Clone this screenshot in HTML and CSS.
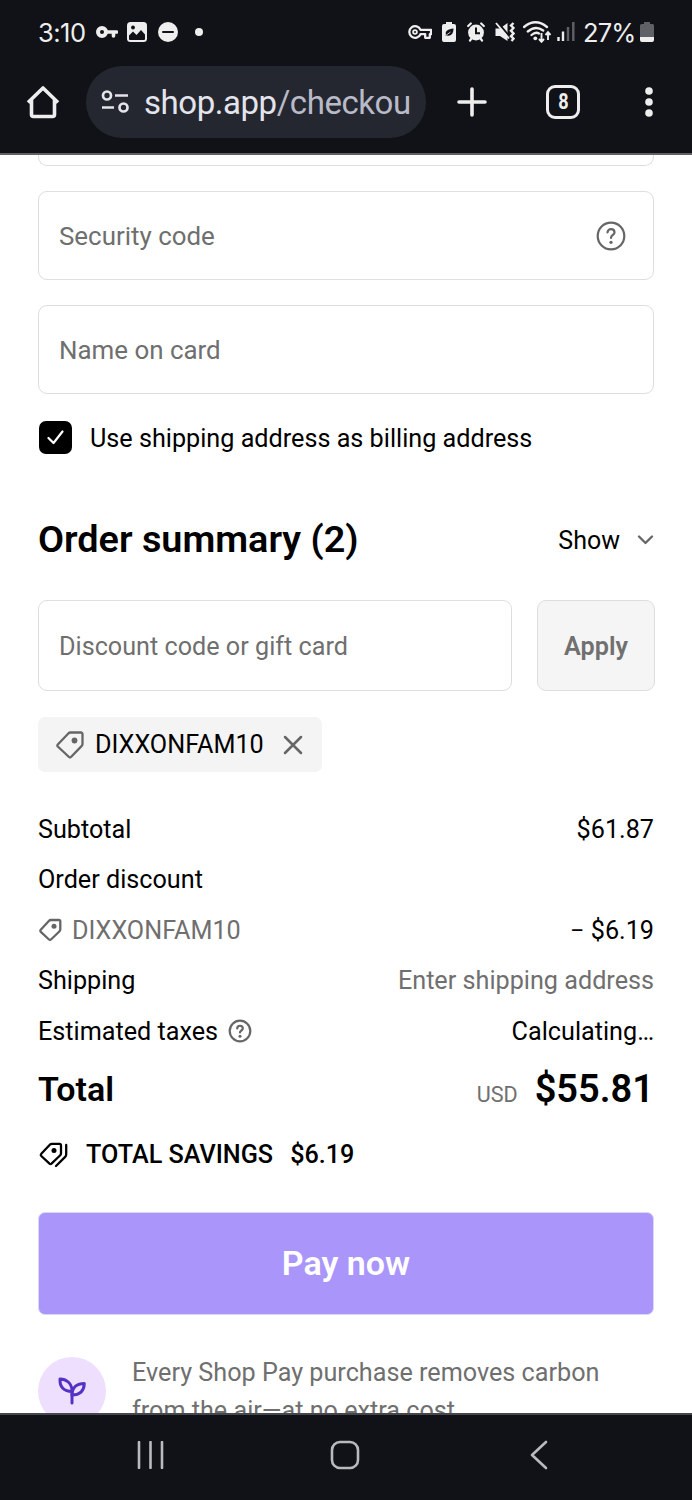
FILE: index.html
```html
<!DOCTYPE html>
<html lang="en">
<head>
<meta charset="utf-8">
<title>Checkout</title>
<link rel="stylesheet" href="styles.css">
</head>
<body>
<div class="phone">
  <header class="chrome">
    <div class="status">
      <div class="status-left">
        <span class="time">3:10</span>
        <svg class="i-key" width="22" height="16" viewBox="0 0 22 16"><circle cx="6" cy="8" r="4" fill="none" stroke="#eee" stroke-width="4"/><path d="M11 8h9.500M17.500 8v4" stroke="#eee" stroke-width="3.600" stroke-linecap="round"/></svg>
        <svg class="i-img" width="20" height="20" viewBox="0 0 20 20"><rect width="20" height="20" rx="3.500" fill="#eee"/><circle cx="6" cy="5.500" r="1.900" fill="#111217"/><path d="M2 17v-3.500L6 9.500l3.500 3.500 4.500-5 4 4.500V17a1 1 0 0 1-1 1H3a1 1 0 0 1-1-1z" fill="#111217"/></svg>
        <svg class="i-dnd" width="20" height="20" viewBox="0 0 20 20"><circle cx="10" cy="10" r="10" fill="#eee"/><path d="M5 10h10" stroke="#111217" stroke-width="2" stroke-linecap="round"/></svg>
        <svg class="i-dot" width="8" height="8" viewBox="0 0 8 8"><circle cx="4" cy="4" r="4" fill="#eee"/></svg>
      </div>
      <div class="status-right">
        <svg class="r-key" width="24" height="16" viewBox="0 0 24 16"><path d="M12.500 5.800H23v4.400h-1.200v3.600h-4.600v-3.600h-4.700A5.800 5.800 0 1 1 12.500 5.800z" fill="none" stroke="#eee" stroke-width="2.300" stroke-linejoin="round"/><circle cx="7" cy="8" r="1.900" fill="none" stroke="#eee" stroke-width="1.800"/></svg>
        <svg class="r-leaf" width="14" height="20" viewBox="0 0 14 20"><path d="M4 0h6v2h2a2 2 0 0 1 2 2v14a2 2 0 0 1-2 2H2a2 2 0 0 1-2-2V4a2 2 0 0 1 2-2h2z" fill="#eee"/><path d="M3 14l1-1.500C2.800 9 6 7 11.500 6.500c0 5-2.500 8-6.500 7z" fill="#111217"/><path d="M2.500 14.500L8.500 10" stroke="#eee" stroke-width=".8"/></svg>
        <svg class="r-alarm" width="18" height="20" viewBox="0 0 18 20"><circle cx="9" cy="10.500" r="7.900" fill="#eee"/><path d="M9 5.500v5.700h4" fill="none" stroke="#111217" stroke-width="2"/><path d="M1.200 4l2.600-2.500M16.800 4l-2.600-2.500M3 18.500l1.500-2M15 18.500l-1.500-2" stroke="#eee" stroke-width="2.200" stroke-linecap="round"/></svg>
        <svg class="r-mute" width="20" height="20" viewBox="0 0 20 20"><path d="M0.500 6.500H5L12.500 1v18L5 14H0.500z" fill="#eee"/><path d="M2.500 0l12 14.500" stroke="#111217" stroke-width="2"/><path d="M1 1l13 15.500" stroke="#eee" stroke-width="1.900"/><path d="M18.500 1l-2.500 2.500 2.500 2.500-2.500 2.800 2.500 2.700-2.500 2.700 2.500 2.500-2 2.300" fill="none" stroke="#eee" stroke-width="2.400"/></svg>
        <svg class="r-wifi" width="29" height="22" viewBox="0 0 29 22"><path d="M1 6Q12.500-3.500 24 6M4.800 10.500Q12.500 4 20.200 9.500M8.500 14Q12.500 10.500 16 12.500" fill="none" stroke="#eee" stroke-width="2.300" stroke-linecap="round"/><circle cx="12.300" cy="17.300" r="1.900" fill="#eee"/><path d="M18.500 12v8.500M16 18l2.500 2.800 2.500-2.800M25 19v-7.500M22.500 14L25 11.200l2.500 2.800" fill="none" stroke="#eee" stroke-width="1.900"/></svg>
        <svg class="r-sig" width="18" height="20" viewBox="0 0 18 20"><path d="M1.500 15v4M6 9.500V19" stroke="#eee" stroke-width="2.400"/><path d="M11 5v14M16.300 0v19" stroke="#606166" stroke-width="2.400"/></svg>
        <span class="pct">27%</span>
        <svg class="r-bat" width="14" height="20" viewBox="0 0 14 20"><path d="M4 0h6v2h2.500a1.500 1.500 0 0 1 1.500 1.500V15H0V3.500A1.500 1.500 0 0 1 1.500 2H4z" fill="#606166"/><path d="M0 15h14v3a2 2 0 0 1-2 2H2a2 2 0 0 1-2-2z" fill="#eee"/></svg>
      </div>
    </div>
    <div class="toolbar">
      <svg class="t-home" width="34" height="34" viewBox="0 0 34 34"><path d="M2 17.500L17 3l15 14.500M5.500 15v14.500a2 2 0 0 0 2 2h19a2 2 0 0 0 2-2V15" fill="none" stroke="#eee" stroke-width="3.600" stroke-linejoin="round"/></svg>
      <div class="omnibox">
        <svg class="t-tune" width="28" height="24" viewBox="0 0 28 24"><g fill="none" stroke="#e4e4ea" stroke-width="2.700"><circle cx="6" cy="5.500" r="4"/><path d="M14 5.500h13M1 17.500h12"/><circle cx="22.500" cy="17.500" r="4"/></g></svg>
        <span class="url">shop.app<span class="path">/checkou</span></span>
      </div>
      <svg class="t-plus" width="30" height="30" viewBox="0 0 30 30"><path d="M15 2v26M2 15h26" stroke="#eee" stroke-width="3.600" stroke-linecap="round"/></svg>
      <div class="tabs"><span class="count">8</span></div>
      <svg class="t-more" width="8" height="30" viewBox="0 0 8 30"><g fill="#eee"><circle cx="4" cy="4" r="3.800"/><circle cx="4" cy="15" r="3.800"/><circle cx="4" cy="26" r="3.800"/></g></svg>
    </div>
  </header>

  <main class="page">
    <div class="field cut"></div>
    <div class="field"><span>Security code</span>
      <svg width="30" height="30" viewBox="0 0 30 30"><g fill="none" stroke="#666" stroke-width="2.200" stroke-linecap="round"><circle cx="15" cy="15" r="13.300"/><path d="M11.500 11.500C11.500 7 18.500 7 18.500 11.500C18.500 14 15 14 15 17"/></g><circle cx="15" cy="21.300" r="1.600" fill="#666"/></svg>
    </div>
    <div class="field"><span>Name on card</span></div>
    <div class="check">
      <span class="box"><svg width="17" height="15" viewBox="0 0 17 15"><path d="M1.500 8l5 5L15.500 1.500" fill="none" stroke="#fff" stroke-width="2.200" stroke-linecap="round" stroke-linejoin="round"/></svg></span>
      <span>Use shipping address as billing address</span>
    </div>
    <div class="summary-head">
      <h2>Order summary (2)</h2>
      <span class="show"><span>Show</span><svg width="17" height="10" viewBox="0 0 17 10"><path d="M2 1.500l6.500 6.500L15 1.500" fill="none" stroke="#666" stroke-width="2.300" stroke-linecap="round" stroke-linejoin="round"/></svg></span>
    </div>
    <div class="discount">
      <div class="field code"><span>Discount code or gift card</span></div>
      <div class="apply"><span>Apply</span></div>
    </div>
    <div class="chip">
      <svg width="28" height="28" viewBox="0 0 28 28"><path d="M14.500 1.500H25a1.500 1.500 0 0 1 1.500 1.500v10a3 3 0 0 1-1 2.200L15 26a1.500 1.500 0 0 1-2 0L1.800 15.500a1.500 1.500 0 0 1 0-2L12.300 2.500a3 3 0 0 1 2.200-1z" fill="none" stroke="#666" stroke-width="2.300"/><circle cx="18.500" cy="9.500" r="2.900" fill="#666"/></svg>
      <span>DIXXONFAM10</span>
      <svg class="close" width="20" height="20" viewBox="0 0 20 20"><path d="M2 2l16 16M18 2L2 18" stroke="#666" stroke-width="2.500" stroke-linecap="round"/></svg>
    </div>
    <div class="rows">
      <div class="row"><span>Subtotal</span><span>$61.87</span></div>
      <div class="row"><span>Order discount</span></div>
      <div class="row"><span class="with-tag muted"><svg width="24" height="24" viewBox="0 0 24 24"><path d="M13 2h7.800a1.500 1.500 0 0 1 1.500 1.500v7.800a3 3 0 0 1-1 2.200L13 21.500a1.500 1.500 0 0 1-2 0L2.800 13.900a1.500 1.500 0 0 1 0-2.200L10.800 3A3 3 0 0 1 13 2z" fill="none" stroke="#666" stroke-width="2.300"/><circle cx="16" cy="8.200" r="2.500" fill="#666"/></svg><span>DIXXONFAM10</span></span><span>− $6.19</span></div>
      <div class="row"><span>Shipping</span><span class="muted">Enter shipping address</span></div>
      <div class="row"><span class="taxes"><span>Estimated taxes</span><svg width="24" height="24" viewBox="0 0 24 24"><g fill="none" stroke="#666" stroke-width="2.200" stroke-linecap="round"><circle cx="12" cy="12" r="10.300"/><path d="M9.200 9.500C9.200 5.800 14.800 5.800 14.800 9.500C14.800 11.500 12 11.500 12 13.500"/></g><circle cx="12" cy="17.200" r="1.500" fill="#666"/></svg></span><span>Calculating…</span></div>
    </div>
    <div class="total"><span>Total</span><span class="sum"><span class="usd">USD</span><span class="amount">$55.81</span></span></div>
    <div class="savings">
      <svg width="30" height="26" viewBox="0 0 30 26"><g fill="none" stroke="#000" stroke-width="2.300" stroke-linecap="round"><path d="M14 1.800h7.500A1.500 1.500 0 0 1 23 3.300v8a3 3 0 0 1-1 2.200l-8.500 8.200a1.500 1.500 0 0 1-2 0L3.300 14a1.500 1.500 0 0 1 0-2.200L11.800 2.800a3 3 0 0 1 2.200-1z"/><path d="M28.200 3v9.500a4 4 0 0 1-1.300 2.700L18 24"/></g><circle cx="16" cy="8.600" r="2.500"/></svg>
      <span class="savings-label">TOTAL SAVINGS</span><span class="savings-value">$6.19</span>
    </div>
    <div class="pay"><span>Pay now</span></div>
    <div class="carbon">
      <span class="leaf"><svg width="28" height="28" viewBox="0 0 28 28"><g fill="none" stroke="#5433c4" stroke-width="3" stroke-linecap="round" stroke-linejoin="round"><path d="M14 26V14C14 6 8 2 2 2C1.500 10 6 14.500 14 14.500"/><path d="M14 18C14 10 19.500 6.500 26.300 6.500C26 14 21.500 18 14 18z"/></g></svg></span>
      <p><span>Every Shop Pay purchase removes carbon</span><br><span>from the air—at no extra cost.</span></p>
    </div>
  </main>

  <footer class="nav">
    <svg class="n-recent" width="28" height="28" viewBox="0 0 28 28"><path d="M2 1v26M13.500 1v26M25 1v26" stroke="#b9babd" stroke-width="2.600" stroke-linecap="round"/></svg>
    <svg class="n-home" width="30" height="30" viewBox="0 0 30 30"><rect x="2" y="2" width="26" height="26" rx="8" fill="none" stroke="#b9babd" stroke-width="2.600"/></svg>
    <svg class="n-back" width="18" height="30" viewBox="0 0 18 30"><path d="M16 2L2 15l14 13" fill="none" stroke="#b9babd" stroke-width="2.600" stroke-linecap="round" stroke-linejoin="round"/></svg>
  </footer>
</div>
</body>
</html>
```
FILE: styles.css
```css
* { box-sizing: border-box; }
body { margin: 0; background: #fff; font-family: Roboto, "Liberation Sans", sans-serif; font-size: 25.2px; color: #000; }
svg { display: block; flex: none; }
span { white-space: nowrap; }
.phone { width: 692px; height: 1500px; display: flex; flex-direction: column; overflow: hidden; }

/* Status bar and browser toolbar */
.chrome { height: 155px; flex: none; background: #111217; border-bottom: 2px solid #606065; color: #eee; }
.status { height: 64px; display: flex; justify-content: space-between; padding: 0 38px; }
.status-left, .status-right { display: flex; align-items: center; }
.time, .pct { font-family: Inter, Roboto, sans-serif; font-size: 25.5px; letter-spacing: -0.5px; }
.time { width: 49px; }
.i-key { margin-left: 9px; }
.i-img { margin-left: 9px; }
.i-dnd { margin-left: 11px; }
.i-dot { margin-left: 17px; }
.r-leaf { margin-left: 10px; }
.r-alarm { margin-left: 11px; }
.r-mute { margin-left: 10px; }
.r-wifi { margin-left: 8px; }
.r-sig { margin-left: 5px; }
.pct { width: 54px; margin-left: 8px; letter-spacing: -0.9px; }
.r-bat { margin-left: 3px; }
.toolbar { display: flex; align-items: center; height: 76px; padding: 0 39px 0 26px; }
.omnibox { width: 340px; height: 72px; margin-left: 26px; background: #242730; border-radius: 36px; display: flex; align-items: center; padding-left: 15px; gap: 15px; }
.url { padding-top: 1px; font-size: 33px; letter-spacing: -0.45px; color: #e4e4ec; }
.path { color: #b9bac8; }
.t-plus { margin-left: 31px; }
.tabs { width: 34px; height: 34px; margin-left: 59px; border: 3.500px solid #eee; border-radius: 9px; display: flex; align-items: center; justify-content: center; }
.count { font-size: 22px; font-weight: 700; line-height: 26px; transform: scaleX(0.82); }
.t-more { margin-left: auto; }

/* Checkout form */
.page { flex: 1; min-height: 0; overflow: hidden; padding: 0 38px; }
.field { height: 89px; margin-bottom: 25px; border: 1.500px solid #dedede; border-radius: 9px; display: flex; align-items: center; justify-content: space-between; padding: 0 27px 0 20px; color: #6f6f6f; font-size: 25.9px; }
.field span { padding-top: 1px; }
.field.cut { height: 11px; border-top: 0; border-radius: 0 0 9px 9px; }
.check { display: flex; align-items: center; gap: 19px; height: 34px; margin-top: 26px; }
.check > span:last-child { padding-top: 3px; }
.box { width: 33px; height: 33px; margin-left: 1px; margin-right: -1px; background: #000; border-radius: 7px; display: flex; align-items: center; justify-content: center; }
.summary-head { display: flex; align-items: center; justify-content: space-between; height: 60px; margin-top: 56px; }
h2 { margin: 0; padding-bottom: 3px; font-size: 37.8px; font-weight: 600; }
.show { display: flex; align-items: center; gap: 17px; font-size: 25px; }
.discount { display: flex; gap: 25px; margin: 30px -1px 0 0; }
.field.code { flex: 1; height: 91px; margin: 0; font-size: 25.2px; }
.apply { width: 118px; height: 91px; background: #f5f5f5; border: 1.500px solid #dedede; border-radius: 9px; display: flex; align-items: center; justify-content: center; padding-top: 1px; color: #707070; font-weight: 600; }
.chip { width: 284px; height: 55px; margin-top: 26px; background: #f4f4f4; border-radius: 7px; display: flex; align-items: center; padding-left: 18px; gap: 11px; }
.close { margin-left: auto; margin-right: 19px; }
.rows { margin-top: 32px; }
.row { height: 50.500px; display: flex; align-items: center; justify-content: space-between; }
.muted { color: #6f6f6f; }
.with-tag, .taxes { display: flex; align-items: center; gap: 10px; }
.total { display: flex; align-items: center; justify-content: space-between; height: 64px; font-size: 34px; font-weight: 600; }
.sum { display: flex; align-items: baseline; gap: 17px; }
.usd { font-size: 21.6px; font-weight: 400; color: #6f6f6f; }
.amount { font-size: 38px; }
.savings { display: flex; align-items: center; height: 34px; margin-top: 17px; font-weight: 500; }
.savings-label { margin-left: 18px; }
.savings-value { margin-left: 17px; }
.pay { height: 103px; margin-top: 40px; background: #aa96fb; border: 1.500px solid #dcd6f4; border-radius: 7px; display: flex; align-items: center; justify-content: center; color: #fff; font-size: 34px; font-weight: 600; }
.carbon { display: flex; gap: 26px; margin-top: 42px; color: #6f6f6f; }
.leaf { width: 68px; height: 68px; flex: none; border-radius: 50%; background: #eedfff; display: flex; align-items: center; justify-content: center; }
p { margin: -3px 0 0; line-height: 38px; }

/* System navigation */
.nav { height: 87px; flex: none; background: #111217; border-top: 2px solid #46474b; display: flex; align-items: center; padding: 0 0 5px 137px; }
.n-home { margin-left: 165px; }
.n-back { margin-left: 170px; }
```
